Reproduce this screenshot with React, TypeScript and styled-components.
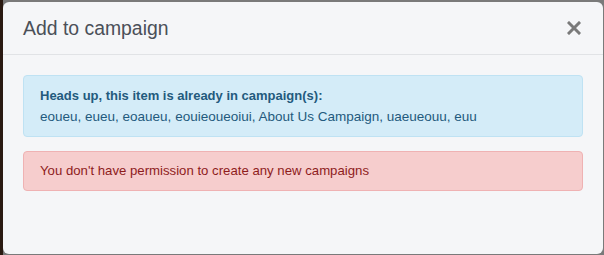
import React from "react";
import styled, { createGlobalStyle } from "styled-components";

const GlobalStyle = createGlobalStyle`
  html, body {
    margin: 0;
    padding: 0;
    height: 100%;
    overflow: hidden;
  }
  body {
    background: #7a7a7a;
    font-family: "Helvetica Neue", "Liberation Sans", Arial, sans-serif;
  }
`;

const Backdrop = styled.div`
  height: 255px;
  padding: 2px 1px 0 3px;
  box-sizing: border-box;
  background: linear-gradient(
    to right,
    #2a1a12 0px,
    #2a1a12 3px,
    #7a7a7a 3px
  );
`;

const Modal = styled.div`
  background: #f5f6f8;
  border-radius: 6px;
  height: 252px;
  box-sizing: border-box;
  display: flex;
  flex-direction: column;
`;

const Header = styled.div`
  display: flex;
  align-items: center;
  justify-content: space-between;
  height: 52px;
  padding: 0 22px 0 20px;
  border-bottom: 1px solid #e1e3e6;
`;

const Title = styled.h4`
  margin: 0;
  font-size: 19.4px;
  font-weight: 400;
  color: #4b5058;
`;

const Close = styled.button`
  border: 0;
  background: none;
  padding: 0;
  width: 14px;
  height: 14px;
  display: flex;
  cursor: pointer;
`;

const Body = styled.div`
  padding: 20px 20px 0 20px;
  display: flex;
  flex-direction: column;
  gap: 14px;
`;

const Alert = styled.div<{ $kind: "info" | "danger" }>`
  border-radius: 4px;
  border: 1px solid ${(p) => (p.$kind === "info" ? "#bfe2f3" : "#efb2b3")};
  background: ${(p) => (p.$kind === "info" ? "#d4ecf8" : "#f6cdcd")};
  color: ${(p) => (p.$kind === "info" ? "#235a7d" : "#8e1c1c")};
  padding: 9px 16px;
  font-size: 13.2px;
  line-height: ${(p) => (p.$kind === "info" ? "21px" : "20px")};
`;

const Strong = styled.div`
  font-weight: 700;
  font-size: 13px;
`;

const List = styled.div`
  font-size: 13.5px;
`;

export default function App() {
  return (
    <>
      <GlobalStyle />
      <Backdrop>
        <Modal>
          <Header>
            <Title>Add to campaign</Title>
            <Close aria-label="Close">
              <svg width="14" height="14" viewBox="0 0 14 14">
                <path
                  d="M2 2 L12 12 M12 2 L2 12"
                  stroke="#7a7a7a"
                  strokeWidth="3"
                  strokeLinecap="square"
                />
              </svg>
            </Close>
          </Header>
          <Body>
            <Alert $kind="info">
              <Strong>Heads up, this item is already in campaign(s):</Strong>
              <List>
                eoueu, eueu, eoaueu, eouieoueoiui, About Us Campaign, uaeueouu,
                euu
              </List>
            </Alert>
            <Alert $kind="danger">
              You don't have permission to create any new campaigns
            </Alert>
          </Body>
        </Modal>
      </Backdrop>
    </>
  );
}
